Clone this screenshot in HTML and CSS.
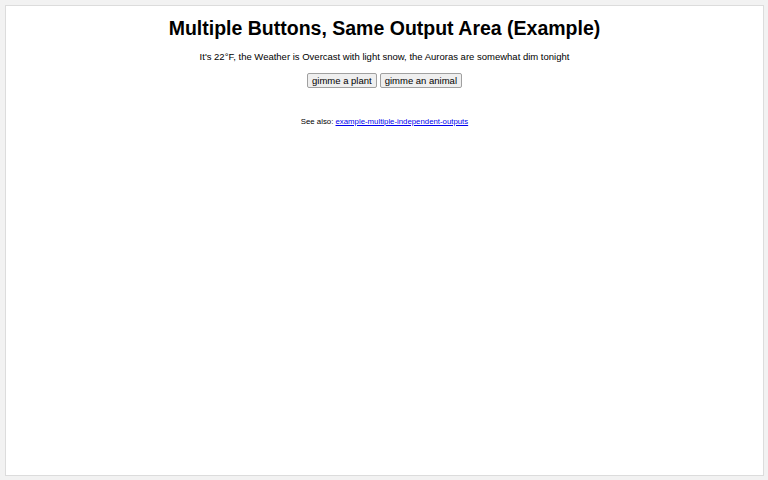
FILE: index.html
```html
<!DOCTYPE html>
<html>
<head>
<meta charset="utf-8">
<link rel="stylesheet" href="styles.css">
</head>
<body>
<div class="card">
  <h1 class="title">Multiple Buttons, Same Output Area (Example)</h1>
  <p class="output">It's 22°F, the Weather is Overcast with light snow, the Auroras are somewhat dim tonight</p>
  <div class="buttons">
    <button class="btn">gimme a plant</button>
    <button class="btn">gimme an animal</button>
  </div>
  <p class="see">See also: <a href="#" class="link">example-multiple-independent-outputs</a></p>
</div>
</body>
</html>
```
FILE: styles.css
```css
html, body { margin: 0; padding: 0; }
body {
  background: #f2f2f2;
  font-family: "Liberation Sans", Arial, sans-serif;
  color: #000;
  padding: 5px 4px 4px 5px;
  height: 480px;
  box-sizing: border-box;
}
.card {
  background: #fff;
  border: 1px solid #dcdcdc;
  height: 471px;
  box-sizing: border-box;
  text-align: center;
}
.title {
  font-size: 19.5px;
  font-weight: bold;
  margin: 10px 0 0 0;
  line-height: 24px;
}
.output {
  font-size: 9.5px;
  margin: 11px 0 0 0;
  line-height: 12px;
}
.buttons {
  margin-top: 10px;
  display: flex;
  justify-content: center;
  gap: 3px;
}
.btn {
  font-family: "Liberation Sans", Arial, sans-serif;
  font-size: 9.5px;
  height: 15px;
  padding: 0 4px;
  background: #efefef;
  border: 1px solid #a0a0a0;
  border-radius: 2px;
  line-height: 13px;
  color: #000;
}
.see {
  font-size: 7.8px;
  margin: 29px 0 0 0;
  line-height: 10px;
}
.link { color: #0000ee; text-decoration: underline; }
```
